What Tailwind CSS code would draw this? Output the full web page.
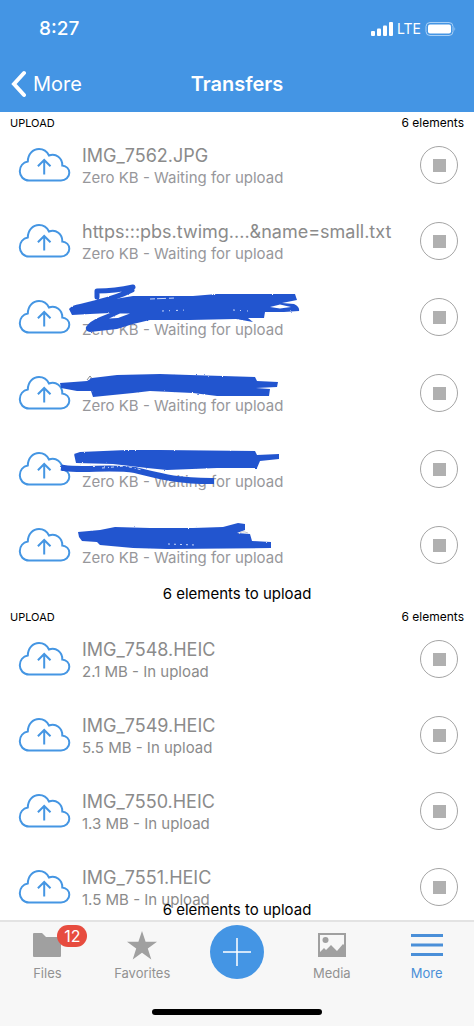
<!DOCTYPE html>
<html lang="en">
<head>
<meta charset="utf-8">
<meta name="viewport" content="width=device-width, initial-scale=1">
<title>Transfers</title>
<script src="https://cdn.jsdelivr.net/npm/@tailwindcss/browser@4"></script>
</head>
<body class="bg-white font-['Inter','Liberation_Sans',sans-serif]">
<svg class="hidden" aria-hidden="true">
  <symbol id="cloud" viewBox="0 0 54 36">
    <g fill="none" stroke="#4596e3" stroke-width="2">
      <path d="M11 33.500C5.500 33.500 1.800 29.200 1.800 24.300C1.800 19.500 5 15.500 9.800 14.500C10 7 15 2 21 2C25.500 2 29 4.400 31 8.500C38 6 44.500 11 44.300 18.500C48.500 19 51.300 22 51.300 25.800C51.300 30.200 47.500 33.500 43 33.500Z"/>
      <path d="M26.200 27.500V13.300M19.900 19.300L26.200 13L32.500 19.300"/>
    </g>
  </symbol>
</svg>
<div class="flex min-h-screen flex-col">
  <header class="bg-[#4495e4] text-white">
    <div class="flex h-14 items-center justify-between pl-[39px] pr-[18px] pt-[2px]">
      <span class="text-[19px] font-medium">8:27</span>
      <div class="flex items-center gap-1">
        <svg class="h-[14px] w-[22px]" viewBox="0 0 22 14" fill="#fff" aria-hidden="true"><rect x="0" y="9" width="4" height="5" rx="1"/><rect x="6" y="6.500" width="4" height="7.500" rx="1"/><rect x="12" y="3.500" width="4" height="10.500" rx="1"/><rect x="18" y="0" width="4" height="14" rx="1"/></svg>
        <span class="text-sm">LTE</span>
        <svg class="h-[14px] w-[31px]" viewBox="0 0 31 14" aria-hidden="true"><rect x="1" y=".5" width="27" height="13" rx="4" fill="none" stroke="#a9d0f5"/><rect x="3" y="2.500" width="23" height="9" rx="2" fill="#fff"/><path d="M29.500 5Q31 7 29.500 9Z" fill="#a9d0f5"/></svg>
      </div>
    </div>
    <div class="grid h-14 grid-cols-[1fr_auto_1fr] items-center px-[11px]">
      <button type="button" class="flex items-center gap-[7px] text-[20px]">
        <svg class="h-[28px] w-[15px]" viewBox="0 0 15 28" fill="none" stroke="#fff" stroke-width="4" stroke-linecap="round" stroke-linejoin="miter" aria-hidden="true"><path d="M13 3L3 14L13 25"/></svg>
        More
      </button>
      <h1 class="text-[20px] font-semibold">Transfers</h1>
      <span></span>
    </div>
  </header>

  <main class="relative flex-1 text-[#8b8b8b]">
    <section class="relative">
      <div class="flex h-[22px] items-center justify-between px-[10px] text-[11px] text-black"><h2>UPLOAD</h2><span class="text-xs">6 elements</span></div>
      <ul class="flex flex-col gap-[14px]">
        <li class="flex h-[62px] items-center pl-[18px] pr-4">
          <svg class="h-9 w-[54px] shrink-0" aria-hidden="true"><use href="#cloud"/></svg>
          <div class="ml-[10px] min-w-0 flex-1 pt-[2px]"><p class="h-6 whitespace-nowrap text-lg leading-6">IMG_7562.JPG</p><p class="text-[15px] leading-5 text-[#97979b]">Zero KB - Waiting for upload</p></div>
          <button type="button" aria-label="Stop" class="flex size-[38px] shrink-0 items-center justify-center rounded-full border border-[#a5a5a5]"><span class="size-[13px] bg-[#b0b0b0]"></span></button>
        </li>
        <li class="flex h-[62px] items-center pl-[18px] pr-4">
          <svg class="h-9 w-[54px] shrink-0" aria-hidden="true"><use href="#cloud"/></svg>
          <div class="ml-[10px] min-w-0 flex-1 pt-[2px]"><p class="h-6 whitespace-nowrap text-lg leading-6">https:::pbs.twimg....&amp;name=small.txt</p><p class="text-[15px] leading-5 text-[#97979b]">Zero KB - Waiting for upload</p></div>
          <button type="button" aria-label="Stop" class="flex size-[38px] shrink-0 items-center justify-center rounded-full border border-[#a5a5a5]"><span class="size-[13px] bg-[#b0b0b0]"></span></button>
        </li>
        <li class="flex h-[62px] items-center pl-[18px] pr-4">
          <svg class="h-9 w-[54px] shrink-0" aria-hidden="true"><use href="#cloud"/></svg>
          <div class="ml-[10px] min-w-0 flex-1 pt-[2px]"><p class="h-6"></p><p class="text-[15px] leading-5 text-[#97979b]">Zero KB - Waiting for upload</p></div>
          <button type="button" aria-label="Stop" class="flex size-[38px] shrink-0 items-center justify-center rounded-full border border-[#a5a5a5]"><span class="size-[13px] bg-[#b0b0b0]"></span></button>
        </li>
        <li class="flex h-[62px] items-center pl-[18px] pr-4">
          <svg class="h-9 w-[54px] shrink-0" aria-hidden="true"><use href="#cloud"/></svg>
          <div class="ml-[10px] min-w-0 flex-1 pt-[2px]"><p class="h-6"></p><p class="text-[15px] leading-5 text-[#97979b]">Zero KB - Waiting for upload</p></div>
          <button type="button" aria-label="Stop" class="flex size-[38px] shrink-0 items-center justify-center rounded-full border border-[#a5a5a5]"><span class="size-[13px] bg-[#b0b0b0]"></span></button>
        </li>
        <li class="flex h-[62px] items-center pl-[18px] pr-4">
          <svg class="h-9 w-[54px] shrink-0" aria-hidden="true"><use href="#cloud"/></svg>
          <div class="ml-[10px] min-w-0 flex-1 pt-[2px]"><p class="h-6"></p><p class="text-[15px] leading-5 text-[#97979b]">Zero KB - Waiting for upload</p></div>
          <button type="button" aria-label="Stop" class="flex size-[38px] shrink-0 items-center justify-center rounded-full border border-[#a5a5a5]"><span class="size-[13px] bg-[#b0b0b0]"></span></button>
        </li>
        <li class="flex h-[62px] items-center pl-[18px] pr-4">
          <svg class="h-9 w-[54px] shrink-0" aria-hidden="true"><use href="#cloud"/></svg>
          <div class="ml-[10px] min-w-0 flex-1 pt-[2px]"><p class="h-6"></p><p class="text-[15px] leading-5 text-[#97979b]">Zero KB - Waiting for upload</p></div>
          <button type="button" aria-label="Stop" class="flex size-[38px] shrink-0 items-center justify-center rounded-full border border-[#a5a5a5]"><span class="size-[13px] bg-[#b0b0b0]"></span></button>
        </li>
      </ul>
      <p class="flex h-[30px] items-center justify-center pt-[6px] text-[15px] text-black">6 elements to upload</p>

      <!-- crayon strokes hiding the file names -->
      <svg class="pointer-events-none absolute left-0 top-0 h-[494px] w-[474px]" viewBox="0 112 474 494" aria-hidden="true">
        <defs><filter id="crayon" x="-5%" y="-5%" width="110%" height="110%"><feTurbulence type="fractalNoise" baseFrequency="0.5" numOctaves="2" seed="4"/><feDisplacementMap in="SourceGraphic" scale="2" xChannelSelector="R" yChannelSelector="G"/></filter></defs>
        <path d="M87 380L90 376L93 380" fill="none" stroke="#8b8b8b"/>
        <g fill="#2455cf" filter="url(#crayon)">
          <path d="M97 297L97 291Q115 291 133 287M98 302Q118 297 132 290" fill="none" stroke="#2455cf" stroke-width="5" stroke-linecap="round" stroke-linejoin="round"/>
          <path fill-rule="evenodd" d="M69 309Q72 305 80 304L96 300L115 299L133 296L150 296L193 296L217 294L295 294L297 300L282 303L294 304Q300 307 299 311L284 312L265 312L264 318L248 318L253 322L236 319L190 320L150 320L133 324L117 329L90 332Q85 331 86 327Q90 321 100 317L110 313L90 314L72 315ZM270 307L280 308.500L291 307L280 304.500ZM109 318.500L118 318L130 313.500L120 313.500Z"/>
          <path d="M60 383L87 381L92 378L117 375L160 374L190 375L223 376L255 377L257 381L278 382L277 387L256 388L270 389L269 396L217 396L193 393L150 391L133 393L93 397L91 391L77 391L61 388Z"/>
          <path d="M74 454L80 452L127 450L160 450L255 451L257 455L279 454L279 459L260 461L257 468L217 468L167 470L147 468L113 464L76 463Z"/>
          <path d="M64 468C85 471 110 466 135 470C160 476 175 481 211 481" fill="none" stroke="#2455cf" stroke-width="6" stroke-linecap="square"/>
          <path d="M78 532L100 530L115 527L150 528L193 528L223 527L238 523L245 524L245 530L237 533L250 534L252 541L271 542L271 548L167 549L133 548L100 545L97 542L82 541L79 537Z"/>
        </g>
        <g fill="none" stroke="#c9d8fb" stroke-width="1">
          <path d="M150 299L176 298" stroke-dasharray="5 2 9 3"/><path d="M162 311L187 310M233 310L248 311" stroke-dasharray="2 5 1 6"/><path d="M102 468L125 466L142 470" stroke-dasharray="3 3 1 2"/><path d="M168 544L195 545" stroke-dasharray="2 4"/><path d="M239 534Q241 530 248 533" stroke="#c6c6cc"/>
        </g>
      </svg>
    </section>

    <section>
      <div class="flex h-[22px] items-center justify-between px-[10px] text-[11px] text-black"><h2>UPLOAD</h2><span class="text-xs">6 elements</span></div>
      <ul class="flex flex-col gap-[14px]">
        <li class="flex h-[62px] items-center pl-[18px] pr-4">
          <svg class="h-9 w-[54px] shrink-0" aria-hidden="true"><use href="#cloud"/></svg>
          <div class="ml-[10px] min-w-0 flex-1 pt-[2px]"><p class="h-6 whitespace-nowrap text-lg leading-6">IMG_7548.HEIC</p><p class="text-[15px] leading-5">2.1 MB - In upload</p></div>
          <button type="button" aria-label="Stop" class="flex size-[38px] shrink-0 items-center justify-center rounded-full border border-[#a5a5a5]"><span class="size-[13px] bg-[#b0b0b0]"></span></button>
        </li>
        <li class="flex h-[62px] items-center pl-[18px] pr-4">
          <svg class="h-9 w-[54px] shrink-0" aria-hidden="true"><use href="#cloud"/></svg>
          <div class="ml-[10px] min-w-0 flex-1 pt-[2px]"><p class="h-6 whitespace-nowrap text-lg leading-6">IMG_7549.HEIC</p><p class="text-[15px] leading-5">5.5 MB - In upload</p></div>
          <button type="button" aria-label="Stop" class="flex size-[38px] shrink-0 items-center justify-center rounded-full border border-[#a5a5a5]"><span class="size-[13px] bg-[#b0b0b0]"></span></button>
        </li>
        <li class="flex h-[62px] items-center pl-[18px] pr-4">
          <svg class="h-9 w-[54px] shrink-0" aria-hidden="true"><use href="#cloud"/></svg>
          <div class="ml-[10px] min-w-0 flex-1 pt-[2px]"><p class="h-6 whitespace-nowrap text-lg leading-6">IMG_7550.HEIC</p><p class="text-[15px] leading-5">1.3 MB - In upload</p></div>
          <button type="button" aria-label="Stop" class="flex size-[38px] shrink-0 items-center justify-center rounded-full border border-[#a5a5a5]"><span class="size-[13px] bg-[#b0b0b0]"></span></button>
        </li>
        <li class="flex h-[62px] items-center pl-[18px] pr-4">
          <svg class="h-9 w-[54px] shrink-0" aria-hidden="true"><use href="#cloud"/></svg>
          <div class="ml-[10px] min-w-0 flex-1 pt-[2px]"><p class="h-6 whitespace-nowrap text-lg leading-6">IMG_7551.HEIC</p><p class="text-[15px] leading-5">1.5 MB - In upload</p></div>
          <button type="button" aria-label="Stop" class="flex size-[38px] shrink-0 items-center justify-center rounded-full border border-[#a5a5a5]"><span class="size-[13px] bg-[#b0b0b0]"></span></button>
        </li>
      </ul>
    </section>
    <p class="absolute inset-x-0 bottom-0 text-center text-[15px] leading-5 text-black">6 elements to upload</p>
  </main>

  <nav class="border-t-2 border-[#e3e3e3] bg-[#f7f7f7] text-[13px] leading-4 text-[#929292]">
    <div class="grid h-[87px] grid-cols-5 pt-[3px]">
      <button type="button" class="flex flex-col items-center">
        <span class="relative flex h-[40px] items-center">
          <svg class="h-6 w-7" viewBox="0 0 28 24" fill="#a0a0a0" aria-hidden="true"><path d="M0 1Q0 0 1 0H9L13 4H27Q28 4 28 5V23Q28 24 27 24H1Q0 24 0 23Z"/></svg>
          <span class="absolute left-6 top-0 flex h-[22px] w-[30px] items-center justify-center rounded-full bg-[#e74c3f] text-base text-white">12</span>
        </span>
        <span>Files</span>
      </button>
      <button type="button" class="flex flex-col items-center">
        <span class="flex h-[40px] items-center"><svg class="h-[29px] w-[30px]" viewBox="0 0 30 29" fill="#a0a0a0" aria-hidden="true"><path d="M15 0L18.600 10.800H30L20.800 17.500L24.300 28.500L15 21.800L5.700 28.500L9.200 17.500L0 10.800H11.400Z"/></svg></span>
        <span>Favorites</span>
      </button>
      <button type="button" aria-label="Add" class="flex size-[54px] items-center justify-center justify-self-center rounded-full bg-[#4495e4]">
        <svg class="size-7" viewBox="0 0 28 28" fill="none" stroke="#fff" stroke-width="1.500" aria-hidden="true"><path d="M14 0V28M0 14H28"/></svg>
      </button>
      <button type="button" class="flex flex-col items-center">
        <span class="flex h-[40px] items-center"><svg class="h-6 w-7" viewBox="0 0 28 24" aria-hidden="true"><rect x="1" y="1" width="26" height="22" fill="none" stroke="#a0a0a0" stroke-width="2"/><circle cx="7.500" cy="7" r="3" fill="#a0a0a0"/><path d="M1 23V20L6 15L8 17L13 12L19 18L25 11L27 13V23Z" fill="#a0a0a0"/></svg></span>
        <span>Media</span>
      </button>
      <button type="button" class="flex flex-col items-center text-[#4a8fd8]">
        <span class="flex h-[40px] items-center"><svg class="h-6 w-8" viewBox="0 0 32 24" fill="#4a8fd8" aria-hidden="true"><rect y="1" width="32" height="3"/><rect y="10.500" width="32" height="3"/><rect y="20" width="32" height="3"/></svg></span>
        <span>More</span>
      </button>
    </div>
    <div class="h-[17px]"><div class="mx-auto h-[6px] w-[170px] rounded-full bg-black"></div></div>
  </nav>
</div>
</body>
</html>
